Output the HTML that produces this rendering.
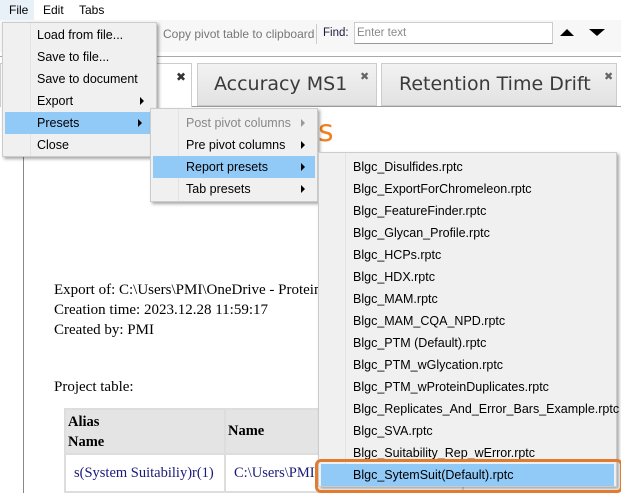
<!DOCTYPE html>
<html><head><style>
*{box-sizing:border-box;margin:0;padding:0}
body{width:621px;height:493px;overflow:hidden;background:#fff;position:relative;font-family:"Liberation Sans","DejaVu Sans",sans-serif;font-size:12px;color:#000}
.abs{position:absolute}
.menu{position:absolute;background:#f0f0f0;border:1px solid #ccc;box-shadow:2px 2px 3px rgba(0,0,0,.35)}
.menu .gut{position:absolute;left:27px;top:0;bottom:0;border-left:1px solid #e3e3e3}
.it{position:absolute;left:2px;right:2px;height:22px;line-height:22px;white-space:nowrap;font-size:12.5px}
.it span{position:absolute;left:30px}
.hl{background:#91c9f7}
.arr{position:absolute;right:10px;top:7px;width:0;height:0;border-top:4px solid transparent;border-bottom:4px solid transparent;border-left:4px solid #000}
.serif{font-family:"Liberation Serif",serif;font-size:14.5px;color:#000}
td{border:2px solid #ddd;white-space:nowrap}
</style></head><body>
<div class="abs" style="left:0;top:0;width:621px;height:22px;background:#fff"></div>
<div class="abs" style="left:0;top:0;width:34px;height:22px;background:#e8f0f8"></div>
<div class="abs" style="left:9px;top:3px">File</div>
<div class="abs" style="left:43px;top:3px">Edit</div>
<div class="abs" style="left:79px;top:3px">Tabs</div>
<div class="abs" style="left:0;top:20px;width:621px;height:32px;background:#f7f7f7"></div>
<div class="abs" style="left:163px;top:27px;color:#777">Copy pivot table to clipboard</div>
<div class="abs" style="left:316px;top:24px;width:1px;height:20px;background:#ccc"></div>
<div class="abs" style="left:323px;top:27px;color:#1a1a3a;font-size:11.5px">Find:</div>
<div class="abs" style="left:354px;top:22px;width:199px;height:22px;background:#fff;border:1px solid #ccc;border-bottom:1px solid #999"></div>
<div class="abs" style="left:357px;top:27px;color:#888;font-size:11.5px">Enter text</div>
<div class="abs" style="left:560px;top:29px;border-left:7px solid transparent;border-right:7px solid transparent;border-bottom:7px solid #000"></div>
<div class="abs" style="left:589px;top:29px;border-left:8px solid transparent;border-right:8px solid transparent;border-top:7px solid #000"></div>
<div class="abs" style="left:0;top:56px;width:621px;height:1px;background:#aaa"></div>
<div class="abs" style="left:0;top:63px;width:192px;height:44px;background:#fff;border:1px solid #ccc;border-bottom:none"></div>
<div class="abs" style="left:176px;top:70px;font-size:12px;color:#333">✖</div>
<div class="abs" style="left:197px;top:63px;width:180px;height:43px;background:linear-gradient(#f2f2f2,#e2e2e2);border:1px solid #ccc"></div>
<div class="abs" style="left:214px;top:73px;font-size:19px;color:#3a3a3a;font-family:'DejaVu Sans',sans-serif">Accuracy MS1</div>
<div class="abs" style="left:360px;top:70px;font-size:11px;color:#666">✖</div>
<div class="abs" style="left:381px;top:63px;width:236px;height:43px;background:linear-gradient(#f2f2f2,#e2e2e2);border:1px solid #ccc"></div>
<div class="abs" style="left:399px;top:73px;font-size:19px;color:#3a3a3a;font-family:'DejaVu Sans',sans-serif">Retention Time Drift</div>
<div class="abs" style="left:604px;top:70px;font-size:11px;color:#666">✖</div>
<div class="abs" style="left:192px;top:106px;width:429px;height:1px;background:#999"></div>
<div class="abs" style="left:23px;top:106px;width:1px;height:387px;background:#888"></div>
<div class="abs" style="left:318px;top:114px;font-size:30px;color:#f08020;font-family:'DejaVu Sans',sans-serif">s</div>
<div class="abs serif" style="left:54px;top:280px;line-height:20px;white-space:nowrap;font-size:15px">Export of: C:\Users\PMI\OneDrive - Protein Metrics Inc<br>Creation time: 2023.12.28 11:59:17<br>Created by: PMI</div>
<div class="abs serif" style="left:54px;top:379px;font-size:15px">Project table:</div>
<table class="abs serif" style="left:64px;top:408px;border-collapse:collapse;width:400px;table-layout:fixed">
<tr style="height:45px;background:#e4e4e4;font-weight:bold"><td style="width:160px;padding-left:2px;line-height:20px">Alias<br>Name</td><td style="padding-left:2px">Name</td></tr>
<tr style="height:38px;color:#1a1a7a"><td style="padding-left:8px">s(System Suitabiliy)r(1)</td><td style="padding-left:8px">C:\Users\PMI\OneDrive</td></tr>
</table>
<div class="menu" style="left:2px;top:22px;width:155px;height:135px">
<div class="gut"></div>
<div class="it" style="top:1px"><span style="left:32px">Load from file...</span></div>
<div class="it" style="top:23px"><span style="left:32px">Save to file...</span></div>
<div class="it" style="top:45px"><span style="left:32px">Save to document</span></div>
<div class="it" style="top:67px"><span style="left:32px">Export</span><i class="arr"></i></div>
<div class="it hl" style="top:89px;right:4px"><span style="left:32px">Presets</span><i class="arr"></i></div>
<div class="it" style="top:111px"><span style="left:32px">Close</span></div>
</div>
<div class="menu" style="left:150px;top:108px;width:168px;height:94px">
<div class="gut"></div>
<div class="it" style="top:3px;color:#888"><span style="left:33px">Post pivot columns</span><i class="arr" style="border-left-color:#999"></i></div>
<div class="it" style="top:25px"><span style="left:33px">Pre pivot columns</span><i class="arr"></i></div>
<div class="it hl" style="top:47px"><span style="left:33px">Report presets</span><i class="arr"></i></div>
<div class="it" style="top:69px"><span style="left:33px">Tab presets</span><i class="arr"></i></div>
</div>
<div class="menu" style="left:318px;top:152px;width:299px;height:335px">
<div class="gut" style="left:26px"></div>
<div class="it" style="top:3px"><span style="left:32px">Blgc_Disulfides.rptc</span></div>
<div class="it" style="top:25px"><span style="left:32px">Blgc_ExportForChromeleon.rptc</span></div>
<div class="it" style="top:47px"><span style="left:32px">Blgc_FeatureFinder.rptc</span></div>
<div class="it" style="top:69px"><span style="left:32px">Blgc_Glycan_Profile.rptc</span></div>
<div class="it" style="top:91px"><span style="left:32px">Blgc_HCPs.rptc</span></div>
<div class="it" style="top:113px"><span style="left:32px">Blgc_HDX.rptc</span></div>
<div class="it" style="top:135px"><span style="left:32px">Blgc_MAM.rptc</span></div>
<div class="it" style="top:157px"><span style="left:32px">Blgc_MAM_CQA_NPD.rptc</span></div>
<div class="it" style="top:179px"><span style="left:32px">Blgc_PTM (Default).rptc</span></div>
<div class="it" style="top:201px"><span style="left:32px">Blgc_PTM_wGlycation.rptc</span></div>
<div class="it" style="top:223px"><span style="left:32px">Blgc_PTM_wProteinDuplicates.rptc</span></div>
<div class="it" style="top:245px"><span style="left:32px">Blgc_Replicates_And_Error_Bars_Example.rptc</span></div>
<div class="it" style="top:267px"><span style="left:32px">Blgc_SVA.rptc</span></div>
<div class="it" style="top:289px"><span style="left:32px">Blgc_Suitability_Rep_wError.rptc</span></div>
<div class="it hl" style="top:311px"><span style="left:32px">Blgc_SytemSuit(Default).rptc</span></div>
</div>
<div class="abs" style="left:315px;top:459px;width:308px;height:34px;border:3px solid #e07b30;border-radius:6px"></div>
</body></html>
